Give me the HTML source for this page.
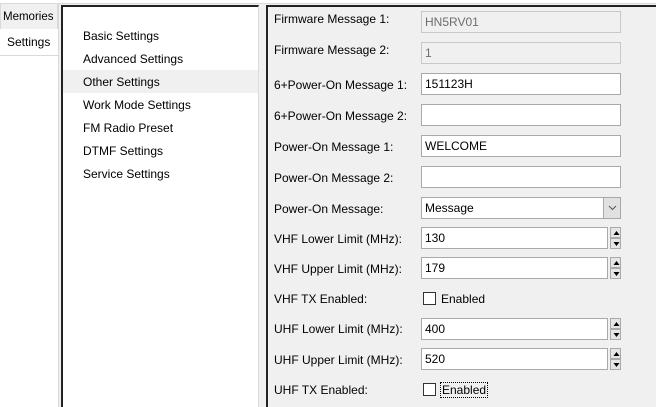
<!DOCTYPE html>
<html><head><meta charset="utf-8"><style>
*{box-sizing:border-box;margin:0;padding:0}
body{width:656px;height:407px;overflow:hidden;background:#fff;font-family:"Liberation Sans",sans-serif;font-size:12px;color:#000;position:relative}
.a{position:absolute}
.lbl{position:absolute;left:274px;line-height:14px}
.in{position:absolute;left:421px;width:200px;height:22px;background:#fff;border:1px solid #a9a9a9;padding-left:3px;line-height:20px;color:#000}
.dis{background:#f0f0f0;border-color:#c8c8c8;color:#6d6d6d}
.sp{width:187px}
.spb{position:absolute;left:610px;width:11px;height:11px;background:#e6e6e6;border:1px solid #a9a9a9}
.spb svg{position:absolute;left:2px;top:2px}
.cb{position:absolute;left:423px;width:13px;height:13px;border:1px solid #333;background:#fff}
.ct{position:absolute;left:441px;line-height:14px}
.tr{position:absolute;left:83px;line-height:14px}
</style></head><body>
<div class="a" style="left:0;top:3px;width:58px;height:26px;background:#f0f0f0;border:1px solid #d9d9d9;border-bottom:none"></div>
<div class="a" style="left:3px;top:10px;line-height:14px;font-size:11.5px">Memories</div>
<div class="a" style="left:0;top:29px;width:59px;height:27px;background:#fff;border-bottom:1px solid #d9d9d9;border-right:1px solid #d9d9d9"></div>
<div class="a" style="left:7px;top:35px;line-height:14px">Settings</div>
<div class="a" style="left:59px;top:56px;width:1px;height:351px;background:#d9d9d9"></div>
<div class="a" style="left:58px;top:3px;width:598px;height:404px;background:#f0f0f0;border-top:1px solid #d9d9d9;border-left:1px solid #d9d9d9"></div>
<div class="a" style="left:61px;top:5px;width:198px;height:402px;background:#fff;border-left:2px solid #222;border-top:2px solid #222;border-right:1px solid #ddd"></div>
<div class="a" style="left:63px;top:70px;width:195px;height:23px;background:#f0f0f0"></div>
<div class="tr" style="top:29px">Basic Settings</div>
<div class="tr" style="top:52px">Advanced Settings</div>
<div class="tr" style="top:75px">Other Settings</div>
<div class="tr" style="top:98px">Work Mode Settings</div>
<div class="tr" style="top:121px">FM Radio Preset</div>
<div class="tr" style="top:144px">DTMF Settings</div>
<div class="tr" style="top:167px">Service Settings</div>
<div class="a" style="left:266px;top:5px;width:390px;height:402px;background:#f0f0f0;border-left:2px solid #222;border-top:2px solid #222"></div>
<div class="lbl" style="top:12px">Firmware Message 1:</div>
<div class="in dis" style="top:11px">HN5RV01</div>
<div class="lbl" style="top:43px">Firmware Message 2:</div>
<div class="in dis" style="top:42px">1</div>
<div class="lbl" style="top:78px">6+Power-On Message 1:</div>
<div class="in" style="top:73px">151123H</div>
<div class="lbl" style="top:109px">6+Power-On Message 2:</div>
<div class="in" style="top:104px"></div>
<div class="lbl" style="top:140px">Power-On Message 1:</div>
<div class="in" style="top:135px">WELCOME</div>
<div class="lbl" style="top:171px">Power-On Message 2:</div>
<div class="in" style="top:166px"></div>
<div class="lbl" style="top:202px">Power-On Message:</div>
<div class="in" style="top:197px">Message</div>
<div class="a" style="left:603px;top:198px;width:17px;height:20px;background:#e1e1e1;border-left:1px solid #a9a9a9"><svg width="17" height="20"><path d="M5 8 L8.5 11.5 L12 8" fill="none" stroke="#555" stroke-width="1"/></svg></div>
<div class="lbl" style="top:232px">VHF Lower Limit (MHz):</div>
<div class="in sp" style="top:227px">130</div>
<div class="spb" style="top:227px"><svg width="7" height="6"><path d="M0.5 5 L3.5 1 L6.5 5Z" fill="#000"/></svg></div>
<div class="spb" style="top:238px"><svg width="7" height="6"><path d="M0.5 1 L3.5 5 L6.5 1Z" fill="#000"/></svg></div>
<div class="lbl" style="top:262px">VHF Upper Limit (MHz):</div>
<div class="in sp" style="top:257px">179</div>
<div class="spb" style="top:257px"><svg width="7" height="6"><path d="M0.5 5 L3.5 1 L6.5 5Z" fill="#000"/></svg></div>
<div class="spb" style="top:268px"><svg width="7" height="6"><path d="M0.5 1 L3.5 5 L6.5 1Z" fill="#000"/></svg></div>
<div class="lbl" style="top:292px">VHF TX Enabled:</div>
<div class="cb" style="top:292px"></div>
<div class="ct" style="top:292px">Enabled</div>
<div class="lbl" style="top:322px">UHF Lower Limit (MHz):</div>
<div class="in sp" style="top:318px">400</div>
<div class="spb" style="top:318px"><svg width="7" height="6"><path d="M0.5 5 L3.5 1 L6.5 5Z" fill="#000"/></svg></div>
<div class="spb" style="top:329px"><svg width="7" height="6"><path d="M0.5 1 L3.5 5 L6.5 1Z" fill="#000"/></svg></div>
<div class="lbl" style="top:353px">UHF Upper Limit (MHz):</div>
<div class="in sp" style="top:348px">520</div>
<div class="spb" style="top:348px"><svg width="7" height="6"><path d="M0.5 5 L3.5 1 L6.5 5Z" fill="#000"/></svg></div>
<div class="spb" style="top:359px"><svg width="7" height="6"><path d="M0.5 1 L3.5 5 L6.5 1Z" fill="#000"/></svg></div>
<div class="lbl" style="top:383px">UHF TX Enabled:</div>
<div class="cb" style="top:383px"></div>
<div class="ct" style="top:382px;left:440px;border:1px dotted #000;padding:0 1px">Enabled</div>
</body></html>
